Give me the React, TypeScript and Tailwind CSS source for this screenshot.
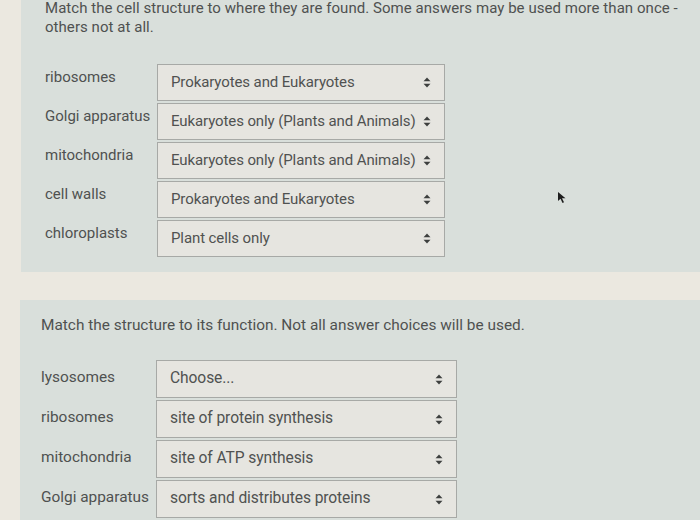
import React from "react";

function Arrows() {
  return (
    <svg width="8" height="11" viewBox="0 0 8 11" className="shrink-0">
      <path d="M4 0.5 L7.5 4.3 L0.5 4.3 Z" fill="#3d3f3e" />
      <path d="M4 10.5 L7.5 6.7 L0.5 6.7 Z" fill="#3d3f3e" />
    </svg>
  );
}

function Select({ text, h, size }: { text: string; h: string; size: string }) {
  return (
    <div
      className={`${h} ${size} w-full flex items-center justify-between pl-[13px] pr-[13px] bg-[#e6e5e0] border border-[#a7a9a6] tracking-[-0.1px] text-[#505251]`}
    >
      <span>{text}</span>
      <Arrows />
    </div>
  );
}

export default function App() {
  const rows1 = [
    ["ribosomes", "Prokaryotes and Eukaryotes"],
    ["Golgi apparatus", "Eukaryotes only (Plants and Animals)"],
    ["mitochondria", "Eukaryotes only (Plants and Animals)"],
    ["cell walls", "Prokaryotes and Eukaryotes"],
    ["chloroplasts", "Plant cells only"],
  ];
  const rows2 = [
    ["lysosomes", "Choose..."],
    ["ribosomes", "site of protein synthesis"],
    ["mitochondria", "site of ATP synthesis"],
    ["Golgi apparatus", "sorts and distributes proteins"],
  ];
  return (
    <div className="relative w-[700px] h-[520px] overflow-hidden bg-[#ebe8e0] flex flex-col font-['Roboto',sans-serif] text-[#4f5150]">
      <div className="ml-[21px] h-[272px] bg-[#d9dfdb] pl-[24px] flex flex-col">
        <p className="text-[15px] leading-[19px] -mt-[1px] w-[650px] tracking-[0.05px]">
          Match the cell structure to where they are found. Some answers may be used more than once - others not at all.
        </p>
        <div className="mt-[27px] flex flex-col gap-[2px]">
          {rows1.map(([l, s], i) => (
            <div key={i} className="flex items-start">
              <div className="w-[112px] shrink-0 pt-[3px] text-[15px] leading-[20px]">{l}</div>
              <div className="w-[288px]">
                <Select text={s} h="h-[37px]" size="text-[15px]" />
              </div>
            </div>
          ))}
        </div>
      </div>
      <div className="mt-[28px] ml-[20px] flex-1 bg-[#d9dfdb] pl-[21px] flex flex-col">
        <p className="text-[15.4px] leading-[20px] pt-[15px]">
          Match the structure to its function. Not all answer choices will be used.
        </p>
        <div className="mt-[25px] flex flex-col gap-[2px]">
          {rows2.map(([l, s], i) => (
            <div key={i} className="flex items-start">
              <div className="w-[115px] shrink-0 pt-[7px] text-[15.4px] leading-[20px]">{l}</div>
              <div className="w-[301px]">
                <Select text={s} h="h-[38px]" size="text-[15.6px]" />
              </div>
            </div>
          ))}
        </div>
      </div>
      <svg className="absolute left-[557px] top-[191px]" width="10" height="13" viewBox="0 0 10 13">
        <path d="M1 1 L1 10 L3.5 7.8 L5.5 12 L7 11.3 L5 7.2 L8.5 7.2 Z" fill="#1e1e1e" />
      </svg>
    </div>
  );
}
